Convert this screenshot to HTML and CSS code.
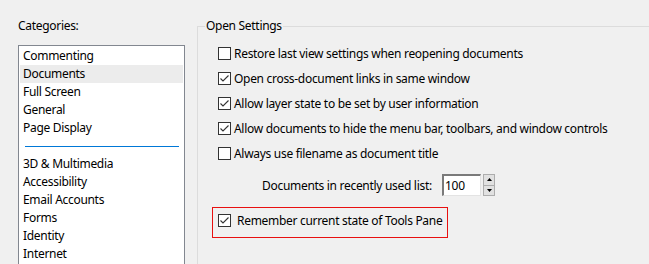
FILE: index.html
```html
<!DOCTYPE html>
<html lang="en">
<head>
    <meta charset="UTF-8">
    <title>Preferences - Documents</title>
    <link rel="stylesheet" href="styles.css">
</head>
<body>
    <div class="dialog">
        <div class="categories">
            <div class="cat-label">Categories:</div>
            <ul class="cat-list">
                <li>Commenting</li>
                <li class="selected">Documents</li>
                <li>Full Screen</li>
                <li>General</li>
                <li>Page Display</li>
                <li class="divider"></li>
                <li>3D &amp; Multimedia</li>
                <li>Accessibility</li>
                <li>Email Accounts</li>
                <li>Forms</li>
                <li>Identity</li>
                <li>Internet</li>
            </ul>
        </div>

        <fieldset class="settings">
            <legend>Open Settings</legend>
            <div class="option">
                <span class="check"></span>
                <span>Restore last view settings when reopening documents</span>
            </div>
            <div class="option">
                <span class="check"><svg viewBox="0 0 11 11"><path d="M1.5 5.5 L4 8 L9.5 2.5"/></svg></span>
                <span>Open cross-document links in same window</span>
            </div>
            <div class="option">
                <span class="check"><svg viewBox="0 0 11 11"><path d="M1.5 5.5 L4 8 L9.5 2.5"/></svg></span>
                <span>Allow layer state to be set by user information</span>
            </div>
            <div class="option">
                <span class="check"><svg viewBox="0 0 11 11"><path d="M1.5 5.5 L4 8 L9.5 2.5"/></svg></span>
                <span>Allow documents to hide the menu bar, toolbars, and window controls</span>
            </div>
            <div class="option">
                <span class="check"></span>
                <span>Always use filename as document title</span>
            </div>

            <div class="recent">
                <span class="recent-label">Documents in recently used list:</span>
                <div class="spin-input">100</div>
                <div class="spin-buttons">
                    <span class="spin-btn"><svg viewBox="0 0 5 3"><path d="M0 3 L2.5 0 L5 3 Z"/></svg></span>
                    <span class="spin-btn"><svg viewBox="0 0 5 3"><path d="M0 0 L5 0 L2.5 3 Z"/></svg></span>
                </div>
            </div>

            <div class="highlight-box">
                <div class="option tools-option">
                    <span class="check"><svg viewBox="0 0 11 11"><path d="M1.5 5.5 L4 8 L9.5 2.5"/></svg></span>
                    <span>Remember current state of Tools Pane</span>
                </div>
            </div>
        </fieldset>
    </div>
</body>
</html>
```

FILE: styles.css
```css
body {
    margin: 0;
    height: 264px;
    overflow: hidden;
    background-color: #f0f0f0;
    font-family: 'Noto Sans', 'Open Sans', sans-serif;
    font-size: 12px;
    letter-spacing: -0.3px;
    color: #000;
}
.dialog {
    display: flex;
    align-items: flex-start;
}
.categories {
    padding: 18px 0 0 18px;
    width: 167px;
    flex-shrink: 0;
}
.cat-label {
    height: 16px;
    line-height: 16px;
    margin-bottom: 11px;
}
.cat-list {
    list-style: none;
    margin: 0;
    padding: 1px;
    height: 219px;
    box-sizing: border-box;
    overflow: hidden;
    background: white;
    border: 1px solid #828790;
    border-bottom: none;
}
.cat-list li {
    height: 18px;
    line-height: 18px;
    padding-left: 3px;
    white-space: nowrap;
}
.cat-list .selected {
    background: #ececec;
}
.cat-list .divider {
    display: flex;
    align-items: center;
    padding: 0 4px 0 5px;
}
.cat-list .divider::before {
    content: "";
    flex: 1;
    height: 1px;
    background: #0078d7;
}
.settings {
    flex: 1;
    min-width: 0;
    margin: 18px 0 0 12px;
    padding: 7px 0 0 20px;
    height: 246px;
    box-sizing: border-box;
    border: 1px solid #dcdcdc;
    border-right: none;
    border-bottom: none;
}
.settings legend {
    margin-left: -13px;
    padding: 0 1px;
    line-height: 16px;
}
.option {
    display: flex;
    align-items: center;
    gap: 3px;
    height: 25px;
    white-space: nowrap;
}
.check {
    width: 13px;
    height: 13px;
    box-sizing: border-box;
    border: 1px solid #333;
    background: white;
    flex-shrink: 0;
}
.check svg {
    display: block;
    width: 11px;
    height: 11px;
    fill: none;
    stroke: #333;
    stroke-width: 1.1;
}
.recent {
    display: flex;
    align-items: center;
    height: 22px;
    margin-top: 8px;
    padding-left: 44px;
}
.recent-label {
    width: 180px;
    white-space: nowrap;
}
.spin-input {
    width: 39px;
    height: 22px;
    box-sizing: border-box;
    padding-left: 1px;
    line-height: 19px;
    background: white;
    border-top: 2px solid #7a7a7a;
    border-left: 2px solid #7a7a7a;
    border-right: 1px solid #e3e3e3;
    border-bottom: 1px solid #e3e3e3;
}
.spin-buttons {
    display: flex;
    flex-direction: column;
    margin-left: 2px;
    width: 12px;
    height: 22px;
}
.spin-btn {
    flex: 1;
    display: flex;
    align-items: center;
    justify-content: center;
    background: #e1e1e1;
    border: 1px solid #adadad;
    box-sizing: border-box;
}
.spin-btn + .spin-btn {
    border-top: none;
}
.spin-btn svg {
    width: 5px;
    height: 3px;
    fill: #000;
}
.highlight-box {
    width: 236px;
    height: 31px;
    box-sizing: border-box;
    margin: 11px 0 0 -6px;
    padding: 6px 0 0 5px;
    border: 1px solid #e81010;
}
.tools-option {
    height: 13px;
    gap: 6px;
}
```
